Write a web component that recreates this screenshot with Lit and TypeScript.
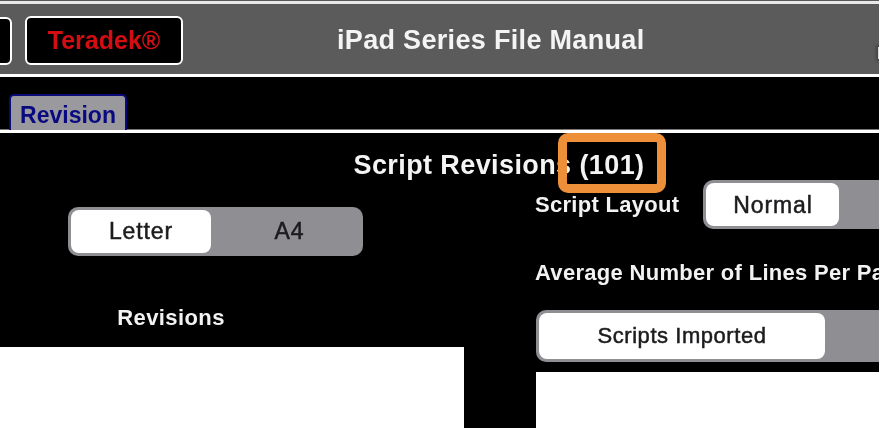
import { LitElement, html, css } from "lit";
import { customElement } from "lit/decorators.js";

@customElement("app-root")
export class AppRoot extends LitElement {
  static styles = css`
    :host {
      display: block;
      position: relative;
      width: 879px;
      height: 428px;
      overflow: hidden;
      background: #000;
      color: #fff;
      font-family: "Liberation Sans", Arial, sans-serif;
    }
    * { box-sizing: border-box; }
    .frame { filter: blur(0.35px); height: 100%; }
    .top-edge { height: 5px; background: #5a5a5a; padding-top: 1px; }
    .top-edge i { display: block; height: 3px; background: #e9e9e9; }
    .header {
      height: 69px;
      background: #5b5b5b;
      display: grid;
      grid-template-columns: 183px 1fr;
      align-items: center;
      position: relative;
      overflow: hidden;
    }
    .header-buttons { display: flex; align-items: center; gap: 13px; margin-left: -40px; margin-top: 2px; }
    .hbtn {
      background: #000;
      border: 2.5px solid #fff;
      border-radius: 6px;
      height: 49px;
      display: flex;
      align-items: center;
      justify-content: center;
    }
    .hbtn.stub { width: 52px; flex: none; height: 48px; }
    .hbtn.teradek {
      width: 158px;
      flex: none;
      color: #d40d12;
      font-weight: 700;
      font-size: 25px;
    }
    .title {
      font-size: 27px;
      font-weight: 700;
      letter-spacing: 0.32px;
      color: #f4f4f4;
      margin-left: 154px;
      margin-top: 1px;
    }
    .edge-glyph {
      position: absolute;
      right: 0;
      top: 42px;
      width: 1.5px;
      height: 12px;
      background: #ddd;
      box-shadow: 0 0 3px 2px #444;
    }
    .rule { height: 3px; background: #fff; }
    .tabs { height: 53px; padding: 17px 0 0 9px; border-bottom: 1px solid #777; }
    .tab {
      width: 118px;
      height: 36px;
      background: #9a9a9e;
      border: 2.5px solid #0a0a78;
      border-bottom: 0;
      border-radius: 5px 5px 0 0;
      color: #0a0a80;
      font-weight: 700;
      font-size: 23px;
      text-align: center;
      line-height: 38px;
    }
    .page-title {
      height: 48px;
      margin-top: -1px;
      text-align: center;
      font-size: 27px;
      font-weight: 700;
      letter-spacing: 0.4px;
      line-height: 66px;
      color: #f4f4f4;
      white-space: nowrap;
      width: 998px;
    }
    .columns { display: grid; grid-template-columns: 464px 72px 343px; }
    .left { padding-top: 27px; }
    .seg {
      background: #8e8e93;
      border-radius: 10px;
      padding: 3px;
      display: flex;
      color: #1c1c1e;
      font-size: 23px;
      letter-spacing: 0.9px;
      -webkit-text-stroke: 0.5px currentColor;
    }
    .seg > div {
      display: flex;
      align-items: center;
      justify-content: center;
    }
    .seg .on { background: #fff; border-radius: 8px; }
    .seg-page { width: 295px; height: 49px; margin-left: 68px; }
    .seg-page > div { width: 149px; padding-left: 8px; }
    .seg-page .on { width: 140px; padding-left: 0; }
    .list-label {
      margin: 46px 0 0;
      width: 342px;
      height: 45px;
      text-align: center;
      font-size: 22px;
      font-weight: 700;
      letter-spacing: 0.4px;
      line-height: 32px;
      color: #f2f2f2;
    }
    .panel { background: #fff; }
    .panel.left-panel { height: 81px; }
    .right { min-width: 0; }
    .layout-row { display: flex; align-items: center; gap: 24px; margin-left: -1px; height: 49px; }
    .label {
      font-size: 22px;
      font-weight: 700;
      letter-spacing: 0.3px;
      white-space: nowrap;
      color: #f2f2f2;
    }
    .seg-layout { width: 300px; height: 49px; flex: none; line-height: 50px; }
    .seg-layout .on { width: 133px; padding-top: 1px; }
    .avg { margin: 28px 0 0 -1px; height: 33px; line-height: 32px; }
    .seg-source { width: 520px; height: 52px; margin-top: 20px; font-size: 22px; letter-spacing: 0.55px; }
    .seg-source .on { width: 286px; }
    .panel.right-panel { height: 56px; margin-top: 10px; width: 343px; }
    .highlight {
      position: absolute;
      left: 558px;
      top: 133px;
      width: 108px;
      height: 60px;
      border: 9px solid #ee8f3a;
      border-radius: 10px;
    }
  `;

  render() {
    return html`
      <div class="frame">
        <div class="top-edge"><i></i></div>
        <header class="header">
          <div class="header-buttons">
            <div class="hbtn stub"></div>
            <div class="hbtn teradek">Teradek®</div>
          </div>
          <div class="title">iPad Series File Manual</div>
          <div class="edge-glyph"></div>
        </header>
        <div class="rule"></div>
        <nav class="tabs"><div class="tab">Revision</div></nav>
        <div class="rule"></div>
        <div class="page-title">Script Revisions (101)</div>
        <main class="columns">
          <section class="left">
            <div class="seg seg-page">
              <div class="on">Letter</div>
              <div>A4</div>
            </div>
            <div class="list-label">Revisions</div>
            <div class="panel left-panel"></div>
          </section>
          <div></div>
          <section class="right">
            <div class="layout-row">
              <span class="label">Script Layout</span>
              <div class="seg seg-layout"><div class="on">Normal</div></div>
            </div>
            <div class="label avg">Average Number of Lines Per Page</div>
            <div class="seg seg-source"><div class="on">Scripts Imported</div></div>
            <div class="panel right-panel"></div>
          </section>
        </main>
        <div class="highlight"></div>
      </div>
    `;
  }
}
